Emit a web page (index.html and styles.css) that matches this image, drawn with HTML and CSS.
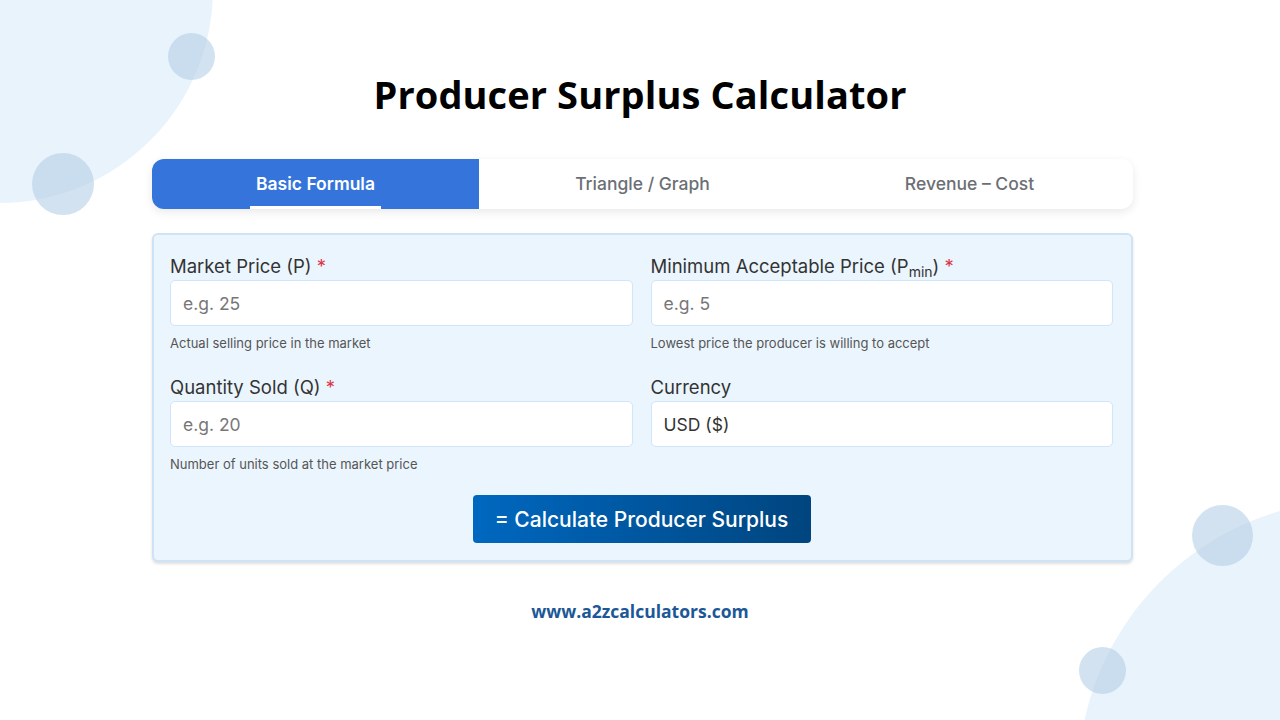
FILE: index.html
```html
<!DOCTYPE html>
<html lang="en">
<head>
<meta charset="utf-8">
<title>Producer Surplus Calculator</title>
<link rel="stylesheet" href="styles.css">
</head>
<body>
<div class="bg">
  <div class="blob blob-tl"></div>
  <div class="blob blob-br"></div>
  <div class="dot dot-1"></div>
  <div class="dot dot-2"></div>
  <div class="dot dot-3"></div>
  <div class="dot dot-4"></div>
</div>
<main class="page">
  <h1 class="title">Producer Surplus Calculator</h1>
  <nav class="tabs">
    <div class="tab active"><span class="tab-label">Basic Formula</span></div>
    <div class="tab"><span class="tab-label">Triangle / Graph</span></div>
    <div class="tab"><span class="tab-label">Revenue – Cost</span></div>
  </nav>
  <section class="card">
    <div class="grid">
      <div class="field">
        <label class="label">Market Price (P) <span class="req">*</span></label>
        <div class="input placeholder">e.g. 25</div>
        <div class="hint">Actual selling price in the market</div>
      </div>
      <div class="field">
        <label class="label">Minimum Acceptable Price (P<sub>min</sub>) <span class="req">*</span></label>
        <div class="input placeholder">e.g. 5</div>
        <div class="hint">Lowest price the producer is willing to accept</div>
      </div>
      <div class="field">
        <label class="label">Quantity Sold (Q) <span class="req">*</span></label>
        <div class="input placeholder">e.g. 20</div>
        <div class="hint">Number of units sold at the market price</div>
      </div>
      <div class="field">
        <label class="label">Currency</label>
        <div class="input value">USD ($)</div>
      </div>
    </div>
    <div class="actions">
      <button class="btn">= Calculate Producer Surplus</button>
    </div>
  </section>
  <footer class="site">www.a2zcalculators.com</footer>
</main>
</body>
</html>
```
FILE: styles.css
```css
* { box-sizing: border-box; }
html, body {
  margin: 0;
  padding: 0;
}
body {
  width: 1280px;
  height: 720px;
  overflow: hidden;
  background: #ffffff;
  font-family: "Inter", "Noto Sans", sans-serif;
  position: relative;
}
.bg {
  position: absolute;
  inset: 0;
  z-index: 0;
  overflow: hidden;
}
.blob {
  position: absolute;
  border-radius: 50%;
  background: #e9f3fc;
}
.blob-tl {
  left: -215px;
  top: -225px;
  width: 428px;
  height: 428px;
}
.blob-br {
  left: 1078px;
  top: 500px;
  width: 560px;
  height: 560px;
}
.dot {
  position: absolute;
  border-radius: 50%;
  background: rgba(180, 206, 230, 0.6);
}
.dot-1 { left: 168px; top: 33px; width: 47px; height: 47px; }
.dot-2 { left: 32px; top: 153px; width: 62px; height: 62px; }
.dot-3 { left: 1192px; top: 505px; width: 61px; height: 61px; }
.dot-4 { left: 1079px; top: 647px; width: 47px; height: 47px; }

.page {
  position: relative;
  z-index: 1;
  display: flex;
  flex-direction: column;
  align-items: center;
  padding-top: 71px;
}
.title {
  margin: 0;
  font-family: "Open Sans", "Noto Sans", sans-serif;
  font-weight: 700;
  font-size: 38px;
  line-height: 46px;
  color: #000;
  letter-spacing: 0.1px;
}
.tabs {
  margin-top: 42px;
  margin-left: 5px;
  width: 981px;
  height: 50px;
  display: grid;
  grid-template-columns: 1fr 1fr 1fr;
  background: #fff;
  border-radius: 12px;
  box-shadow: 0 3px 10px rgba(0, 0, 0, 0.09);
  overflow: hidden;
}
.tab {
  display: flex;
  justify-content: center;
  align-items: stretch;
  color: #6b6f75;
  font-size: 17.5px;
  font-weight: 500;
}
.tab-label {
  display: flex;
  align-items: center;
  padding: 0 6px;
  border-bottom: 3px solid transparent;
  padding-top: 1px;
}
.tab.active {
  background: #3474db;
  color: #fff;
  font-weight: 600;
}
.tab.active .tab-label {
  border-bottom-color: #fff;
}
.card {
  margin-top: 24px;
  margin-left: 5px;
  width: 981px;
  background: #ebf5fe;
  border: 2px solid #cfe3f6;
  border-radius: 6px;
  box-shadow: 0 2px 3px rgba(0, 0, 0, 0.13);
  padding: 20px 18px 17px 16px;
}
.grid {
  display: grid;
  grid-template-columns: 1fr 1fr;
  column-gap: 18px;
  row-gap: 24px;
}
.field {
  display: flex;
  flex-direction: column;
}
.label {
  font-size: 18.5px;
  line-height: 22px;
  color: #333;
  margin-bottom: 3px;
}
.label sub {
  font-size: 14px;
  vertical-align: -4px;
  line-height: 0;
}
.req { color: #dc3545; }
.input {
  height: 46px;
  background: #fff;
  border: 1px solid #cfe5fb;
  border-radius: 5px;
  padding: 0 12px;
  display: flex;
  align-items: center;
  font-size: 17.5px;
}
.placeholder { color: #777; }
.value { color: #333; }
.hint {
  margin-top: 9px;
  font-size: 13px;
  line-height: 17px;
  color: #555;
}
.actions {
  display: flex;
  justify-content: center;
  margin-top: 22px;
}
.btn {
  width: 338px;
  height: 48px;
  border: none;
  border-radius: 4px;
  background: linear-gradient(90deg, #0068c0 0%, #00457f 100%);
  color: #fff;
  font-family: "Inter", "Noto Sans", sans-serif;
  font-size: 21px;
  font-weight: 500;
  padding: 0;
}
.site {
  margin-top: 38px;
  font-family: "Open Sans", "Noto Sans", sans-serif;
  font-weight: 700;
  font-size: 17.5px;
  line-height: 22px;
  color: #1c5796;
}
```
